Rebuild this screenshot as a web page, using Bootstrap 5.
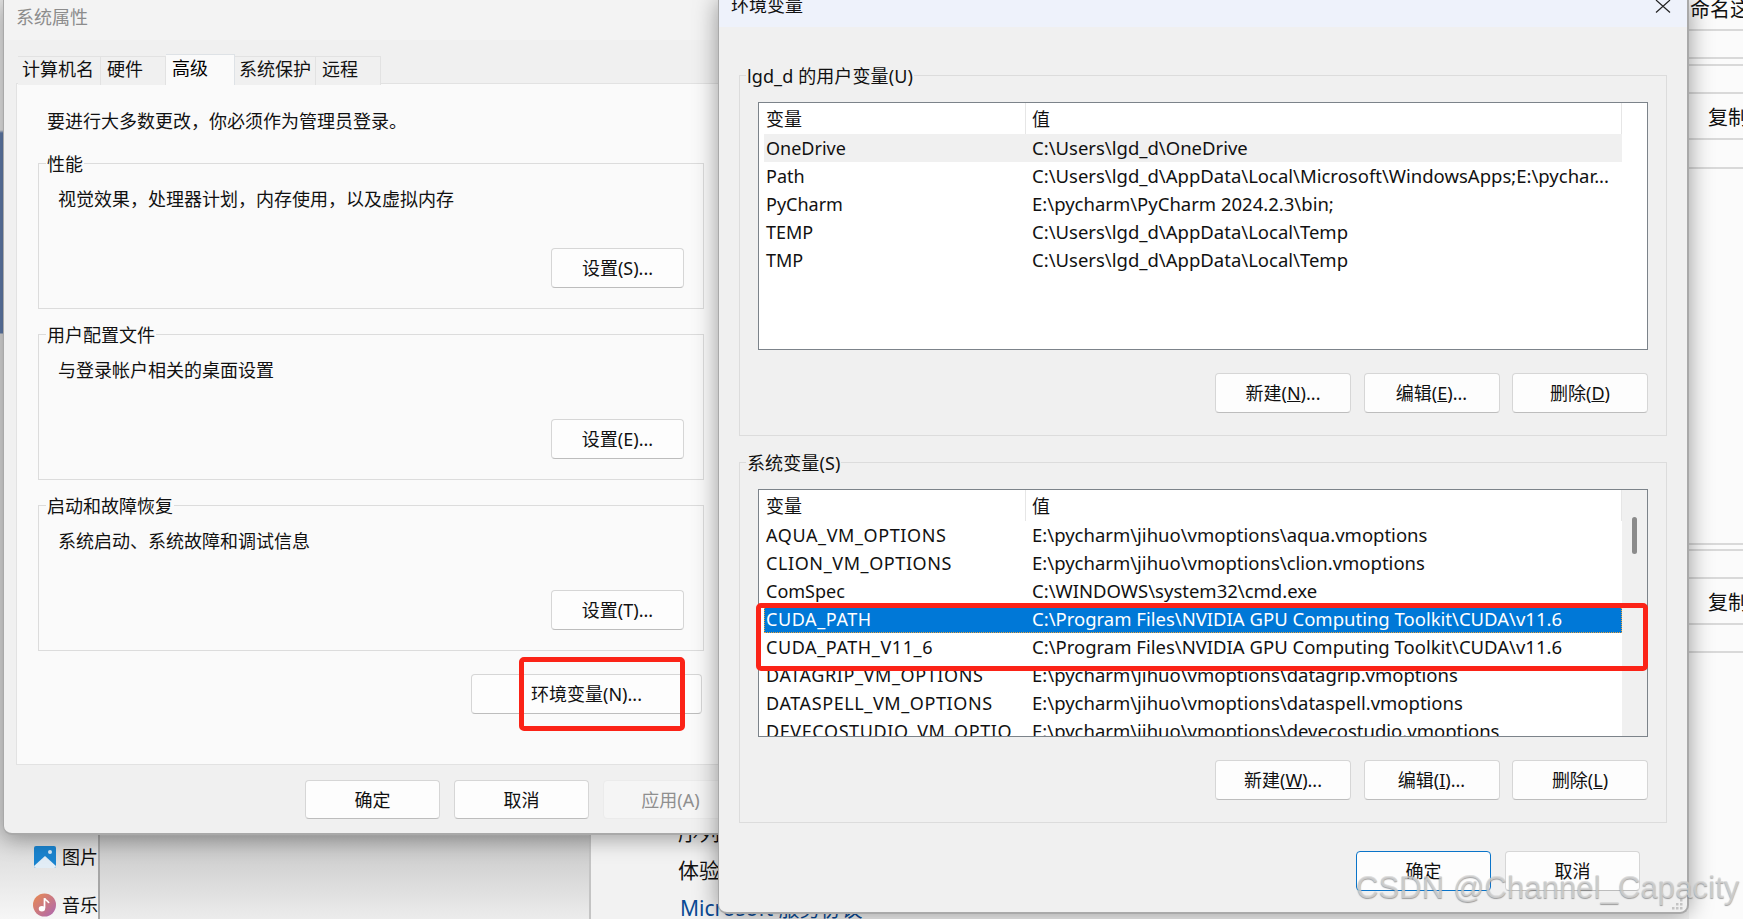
<!DOCTYPE html>
<html lang="zh-CN">
<head>
    <meta charset="UTF-8">
    <meta name="viewport" content="width=device-width, initial-scale=1.0">
    <title>环境变量</title>
    <link rel="stylesheet" href="https://cdn.jsdelivr.net/npm/bootstrap@5.3.0/dist/css/bootstrap.min.css">
    <style>
        body {
            width: 1743px;
            height: 919px;
            overflow: hidden;
            position: relative;
            margin: 0;
            background: #e8e8e8;
            color: #111;
            font-family: "Noto Sans", "Noto Sans CJK SC", sans-serif;
            font-size: 18px;
            line-height: 26px;
        }

        /* desktop behind the dialogs */
        .behind { position: absolute; inset: 0; display: flex; }
        .side-pane {
            width: 100px;
            flex-shrink: 0;
            border-right: 2px solid #a6a6a6;
            padding: 0 0 1px 33px;
            display: flex;
            flex-direction: column;
            justify-content: flex-end;
            gap: 22px;
            background: linear-gradient(#e4e4e4 0 130px, #5f7aa8 133px 333px, #d8d8d8 334px 833px, #f6f6f6 919px);
        }
        .side-row { display: flex; align-items: center; gap: 6px; height: 26px; font-size: 18px; white-space: nowrap; }
        .mid-pane {
            width: 491px;
            flex-shrink: 0;
            border-right: 2px solid #c4c4c4;
            background: linear-gradient(#e8e8e8 0 833px, #c6c6c6 836px, #ececec 919px);
        }
        .info-pane {
            width: 1098px;
            flex-shrink: 0;
            padding: 813px 0 0 87px;
            font-size: 21px;
            background: #f2f2f2;
            white-space: nowrap;
        }
        .info-pane div { height: 38px; line-height: 38px; }
        .ms-link { color: #0a4a94; padding-left: 2px; }
        .far-pane {
            flex-grow: 1;
            min-width: 0;
            display: grid;
            grid-template-rows: 31px 28px 7px 28px 46px 29px 376px 6px 28px 46px 28px 1fr;
            background: #fbfbfb;
            font-size: 20px;
            white-space: nowrap;
        }
        .far-cell { border-bottom: 2px solid #d9d9d9; padding-left: 19px; overflow: hidden; }
        .far-top { padding-left: 1px; line-height: 20px; }
        .far-text { line-height: 48px; }

        /* dialogs */
        .win {
            position: absolute;
            top: 0;
            background: #f0f0f0;
            border: 1px solid #a9a9a9;
            border-top: 0;
            border-radius: 0 0 9px 9px;
            overflow: hidden;
        }
        .win-sys { left: 3px; width: 760px; height: 835px; border-bottom-width: 2px; box-shadow: 0 4px 22px rgba(0, 0, 0, .35); }
        .win-env { left: 718px; width: 971px; height: 914px; border-width: 0 2px 2px 1px; box-shadow: 0 0 24px rgba(0, 0, 0, .4); }

        .sys-title { height: 40px; padding: 4px 0 0 12px; background: #f3f3f3; color: #8c8c8c; }
        .sys-tabs { margin-left: 13px; height: 43px; padding: 14px 0 0 1px; border: 0; align-items: flex-end; }
        .sys-tabs .nav-link {
            height: 29px;
            padding: 0 0 0 6px;
            margin: 0;
            border: 1px solid #e2e2e2;
            border-left-width: 0;
            border-bottom: 0;
            border-radius: 0;
            background: #f0f0f0;
            color: #111;
            line-height: 25px;
        }
        .sys-tabs .nav-link.active { height: 31px; background: #fafafa; line-height: 26px; }
        .sys-tabs .tab-wide { width: 83px; padding-left: 4px; }
        .sys-tabs .tab-mid { width: 81px; padding-left: 4px; }
        .tab-low { width: 65px; }
        .tab-on { width: 69px; }

        .sys-pane {
            margin-left: 12px;
            height: 682px;
            background: #fafafa;
            border: 1px solid #e2e2e2;
            padding: 24px 0 0 21px;
        }
        .pane-note { padding-left: 9px; height: 55px; line-height: 26px; }
        .grp { position: relative; border: 1px solid #dcdcdc; }
        .grp-sys { width: 666px; height: 146px; margin-bottom: 25px; padding: 22px 19px 20px 19px; display: flex; flex-direction: column; justify-content: space-between; }
        .grp-cap { position: absolute; top: -13px; left: 7px; padding: 0 1px; background: #fafafa; line-height: 26px; white-space: nowrap; }
        .grp-env .grp-cap { background: #f0f0f0; left: 6px; letter-spacing: .1px; }

        .btn-win {
            --bs-btn-padding-y: 0;
            --bs-btn-padding-x: 0;
            --bs-btn-font-size: 18px;
            --bs-btn-line-height: 26px;
            --bs-btn-bg: #fdfdfd;
            --bs-btn-color: #111;
            --bs-btn-border-color: #d6d6d6;
            --bs-btn-border-radius: 4px;
            --bs-btn-hover-bg: #f6f6f6;
            --bs-btn-hover-border-color: #d0d0d0;
            --bs-btn-disabled-bg: #f5f5f5;
            --bs-btn-disabled-color: #8f8f8f;
            --bs-btn-disabled-border-color: #ebebeb;
            --bs-btn-disabled-opacity: 1;
            height: 40px;
            width: 135px;
            border-bottom-color: #bdbdbd;
            flex-shrink: 0;
        }
        .btn-set { width: 133px; }
        .btn-envvar { width: 231px; display: block; margin: -2px 0 0 433px; }
        .btn-sm39 { height: 39px; }
        .btn-wide { width: 136px; }
        .btn-def { --bs-btn-border-color: #0a74c9; border-bottom-color: #0a74c9; }

        .sys-foot { display: flex; gap: 14px; padding: 15px 0 0 301px; }

        .env-title { height: 27px; background: #eef2fb; padding-left: 12px; position: relative; }
        .env-title span { display: block; position: relative; top: -8px; line-height: 26px; }
        .env-close { position: absolute; top: 0; left: 936px; }
        .env-main { padding: 48px 0 0 20px; }
        .grp-env { width: 928px; height: 361px; margin-bottom: 26px; padding: 26px 18px 0 18px; }
        .var-list { display: flex; height: 248px; background: #fff; border: 1px solid #7c838a; overflow: hidden; margin-bottom: 23px; }
        .var-body { width: 863px; padding: 0 0 0 5px; flex-shrink: 0; }
        .var-head { display: flex; height: 31px; line-height: 33px; }
        .head-a { width: 262px; padding-left: 2px; border-right: 1px solid #e6e6e6; margin-right: 4px; }
        .head-b { flex-grow: 1; padding-left: 2px; border-right: 1px solid #e6e6e6; }
        .var-row { display: flex; height: 28px; line-height: 28px; white-space: nowrap; }
        .var-n { width: 266px; padding-left: 2px; overflow: hidden; flex-shrink: 0; }
        .name-caps { letter-spacing: .6px; }
        .var-v { padding-left: 2px; font-size: 18.5px; }
        .row-soft { background: #f0f0f0; }
        .row-sel { background: #0078d7; color: #fff; outline: 1px dotted #e9a23b; outline-offset: -1px; }
        .var-scroll { flex-grow: 1; }
        .scroll-on { background: #f0f0f0; padding: 27px 0 0 10px; }
        .scroll-thumb { width: 5px; height: 37px; border-radius: 3px; background: #8b8b8b; }
        .env-btns { display: flex; justify-content: flex-end; gap: 12.5px; }
        .env-foot { display: flex; gap: 14px; padding: 2px 0 0 617px; }

        /* red marks and watermark on top of everything */
        .mark-red { position: absolute; border: 5px solid #fb2317; border-radius: 5px; pointer-events: none; }
        .mark-envbtn { left: 519px; top: 657px; width: 166px; height: 74px; }
        .mark-cuda { left: 756px; top: 603px; width: 892px; height: 68px; }
        .wm {
            position: absolute;
            left: 1356px;
            top: 868px;
            font-family: "Liberation Sans", sans-serif;
            font-size: 31px;
            letter-spacing: .1px;
            line-height: 40px;
            white-space: nowrap;
            color: rgba(215, 215, 215, .75);
            text-shadow: 0 1px 1px rgba(90, 90, 90, .55);
        }
        .grip { position: absolute; left: 1672px; top: 899px; }
    </style>
</head>
<body>
    <!-- desktop behind -->
    <div class="behind">
        <div class="side-pane">
            <div class="side-row">
                <svg width="23" height="22" viewBox="0 0 23 22"><rect x="1" width="22" height="22" rx="2" fill="#1a84cf"/><path d="M1 20 12 10l11 10v0a2 2 0 0 1-2 2H3a2 2 0 0 1-2-2z" fill="#e2edf6"/><circle cx="17" cy="6" r="2" fill="#d5e9f7"/></svg>
                <span>图片</span>
            </div>
            <div class="side-row">
                <svg width="24" height="24" viewBox="0 0 24 24"><defs><linearGradient id="mus" x1="0" y1="0" x2="1" y2="1"><stop offset="0" stop-color="#ea8a4e"/><stop offset="1" stop-color="#ac67b4"/></linearGradient></defs><circle cx="12" cy="12" r="12" fill="url(#mus)"/><path d="M12 5v10.5" stroke="#fff" stroke-width="1.8"/><path d="M12 5c1 2.500 4 2.500 4.500 5" stroke="#fff" stroke-width="1.800" fill="none"/><ellipse cx="9.300" cy="16" rx="3.300" ry="2.900" fill="#fff"/></svg>
                <span>音乐</span>
            </div>
        </div>
        <div class="mid-pane"></div>
        <div class="info-pane">
            <div>序列</div>
            <div>体验</div>
            <div class="ms-link">Microsoft 服务协议</div>
        </div>
        <div class="far-pane">
            <div class="far-cell far-top">命名这</div>
            <div class="far-cell"></div>
            <div class="far-cell"></div>
            <div class="far-cell"></div>
            <div class="far-cell far-text">复制</div>
            <div class="far-cell"></div>
            <div class="far-cell"></div>
            <div class="far-cell"></div>
            <div class="far-cell"></div>
            <div class="far-cell far-text">复制</div>
            <div class="far-cell"></div>
            <div></div>
        </div>
    </div>

    <!-- 系统属性 -->
    <div class="win win-sys">
        <div class="sys-title">系统属性</div>
        <ul class="nav nav-tabs sys-tabs">
            <li class="nav-item"><a class="nav-link tab-wide" href="#">计算机名</a></li>
            <li class="nav-item"><a class="nav-link tab-low" href="#">硬件</a></li>
            <li class="nav-item"><a class="nav-link active tab-on" href="#">高级</a></li>
            <li class="nav-item"><a class="nav-link tab-mid" href="#">系统保护</a></li>
            <li class="nav-item"><a class="nav-link tab-low" href="#">远程</a></li>
        </ul>
        <div class="sys-pane">
            <div class="pane-note">要进行大多数更改，你必须作为管理员登录。</div>
            <div class="grp grp-sys">
                <div class="grp-cap">性能</div>
                <div>视觉效果，处理器计划，内存使用，以及虚拟内存</div>
                <div class="d-flex justify-content-end"><button class="btn btn-win btn-set">设置(S)...</button></div>
            </div>
            <div class="grp grp-sys">
                <div class="grp-cap">用户配置文件</div>
                <div>与登录帐户相关的桌面设置</div>
                <div class="d-flex justify-content-end"><button class="btn btn-win btn-set">设置(E)...</button></div>
            </div>
            <div class="grp grp-sys">
                <div class="grp-cap">启动和故障恢复</div>
                <div>系统启动、系统故障和调试信息</div>
                <div class="d-flex justify-content-end"><button class="btn btn-win btn-set">设置(T)...</button></div>
            </div>
            <button class="btn btn-win btn-envvar">环境变量(N)...</button>
        </div>
        <div class="sys-foot">
            <button class="btn btn-win btn-sm39">确定</button>
            <button class="btn btn-win btn-sm39">取消</button>
            <button class="btn btn-win btn-sm39" disabled>应用(A)</button>
        </div>
    </div>

    <!-- 环境变量 -->
    <div class="win win-env">
        <div class="env-title">
            <span>环境变量</span>
            <svg class="env-close" width="16" height="13" viewBox="0 0 16 13"><path d="M1 0 15 12.500M15 0 1 12.500" stroke="#222" stroke-width="1.200" fill="none"/></svg>
        </div>
        <div class="env-main">
            <div class="grp grp-env">
                <div class="grp-cap">lgd_d 的用户变量(U)</div>
                <div class="var-list">
                    <div class="var-body">
                        <div class="var-head"><div class="head-a">变量</div><div class="head-b">值</div></div>
                        <div class="var-row row-soft"><div class="var-n">OneDrive</div><div class="var-v">C:\Users\lgd_d\OneDrive</div></div>
                        <div class="var-row"><div class="var-n">Path</div><div class="var-v">C:\Users\lgd_d\AppData\Local\Microsoft\WindowsApps;E:\pychar...</div></div>
                        <div class="var-row"><div class="var-n">PyCharm</div><div class="var-v">E:\pycharm\PyCharm 2024.2.3\bin;</div></div>
                        <div class="var-row"><div class="var-n">TEMP</div><div class="var-v">C:\Users\lgd_d\AppData\Local\Temp</div></div>
                        <div class="var-row"><div class="var-n">TMP</div><div class="var-v">C:\Users\lgd_d\AppData\Local\Temp</div></div>
                    </div>
                    <div class="var-scroll"></div>
                </div>
                <div class="env-btns">
                    <button class="btn btn-win btn-wide"><span>新建(<u>N</u>)...</span></button>
                    <button class="btn btn-win btn-wide"><span>编辑(<u>E</u>)...</span></button>
                    <button class="btn btn-win btn-wide"><span>删除(<u>D</u>)</span></button>
                </div>
            </div>
            <div class="grp grp-env">
                <div class="grp-cap">系统变量(S)</div>
                <div class="var-list">
                    <div class="var-body">
                        <div class="var-head"><div class="head-a">变量</div><div class="head-b">值</div></div>
                        <div class="var-row"><div class="var-n name-caps">AQUA_VM_OPTIONS</div><div class="var-v">E:\pycharm\jihuo\vmoptions\aqua.vmoptions</div></div>
                        <div class="var-row"><div class="var-n name-caps">CLION_VM_OPTIONS</div><div class="var-v">E:\pycharm\jihuo\vmoptions\clion.vmoptions</div></div>
                        <div class="var-row"><div class="var-n">ComSpec</div><div class="var-v">C:\WINDOWS\system32\cmd.exe</div></div>
                        <div class="var-row row-sel"><div class="var-n name-caps">CUDA_PATH</div><div class="var-v">C:\Program Files\NVIDIA GPU Computing Toolkit\CUDA\v11.6</div></div>
                        <div class="var-row"><div class="var-n name-caps">CUDA_PATH_V11_6</div><div class="var-v">C:\Program Files\NVIDIA GPU Computing Toolkit\CUDA\v11.6</div></div>
                        <div class="var-row"><div class="var-n name-caps">DATAGRIP_VM_OPTIONS</div><div class="var-v">E:\pycharm\jihuo\vmoptions\datagrip.vmoptions</div></div>
                        <div class="var-row"><div class="var-n name-caps">DATASPELL_VM_OPTIONS</div><div class="var-v">E:\pycharm\jihuo\vmoptions\dataspell.vmoptions</div></div>
                        <div class="var-row"><div class="var-n name-caps">DEVECOSTUDIO_VM_OPTIO</div><div class="var-v">E:\pycharm\jihuo\vmoptions\devecostudio.vmoptions</div></div>
                    </div>
                    <div class="var-scroll scroll-on"><div class="scroll-thumb"></div></div>
                </div>
                <div class="env-btns">
                    <button class="btn btn-win btn-wide"><span>新建(<u>W</u>)...</span></button>
                    <button class="btn btn-win btn-wide"><span>编辑(<u>I</u>)...</span></button>
                    <button class="btn btn-win btn-wide"><span>删除(<u>L</u>)</span></button>
                </div>
            </div>
            <div class="env-foot">
                <button class="btn btn-win btn-def">确定</button>
                <button class="btn btn-win">取消</button>
            </div>
        </div>
    </div>

    <div class="mark-red mark-envbtn"></div>
    <div class="mark-red mark-cuda"></div>
    <svg class="grip" width="12" height="12" viewBox="0 0 12 12" fill="#c4c4c4"><rect x="8" y="0" width="2.500" height="2.500"/><rect x="4" y="4" width="2.500" height="2.500"/><rect x="8" y="4" width="2.500" height="2.500"/><rect x="0" y="8" width="2.500" height="2.500"/><rect x="4" y="8" width="2.500" height="2.500"/><rect x="8" y="8" width="2.500" height="2.500"/></svg>
    <div class="wm">CSDN @Channel_Capacity</div>

    <script src="https://cdn.jsdelivr.net/npm/bootstrap@5.3.0/dist/js/bootstrap.bundle.min.js"></script>
</body>
</html>
